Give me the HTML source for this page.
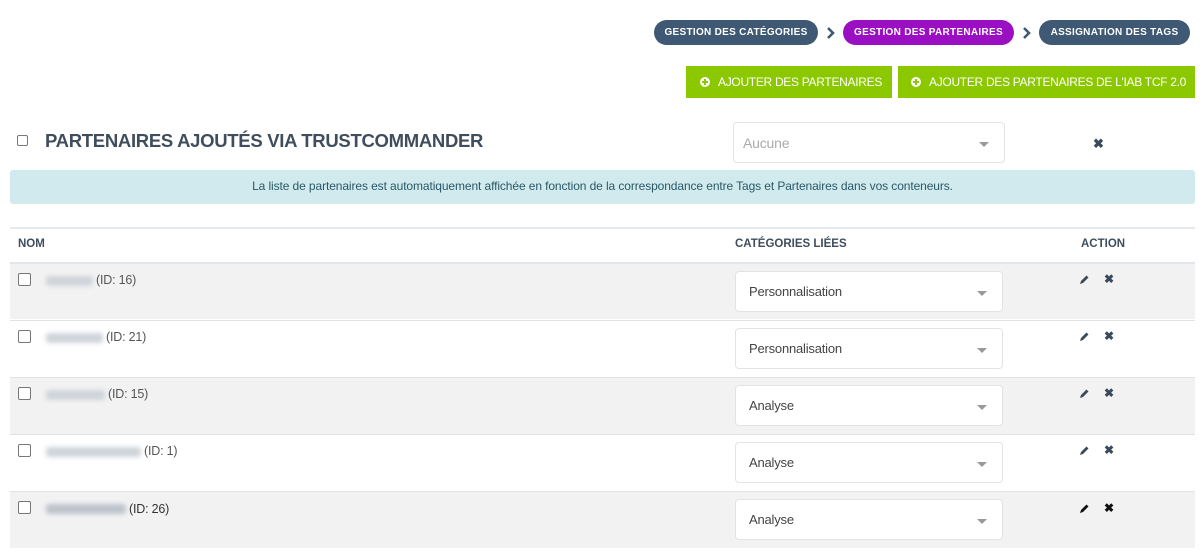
<!DOCTYPE html>
<html><head><meta charset="utf-8"><style>
*{box-sizing:border-box;margin:0;padding:0}
body{width:1200px;height:553px;background:#fff;font-family:"Liberation Sans",sans-serif;position:relative;overflow:hidden;color:#555}
.a{position:absolute}
.pill{position:absolute;top:20px;height:25px;border-radius:13px;background:#3f5873;color:#fff;font-weight:bold;font-size:10px;letter-spacing:.3px;line-height:25px;text-align:center}
.chev{position:absolute;top:27px}
.btn{position:absolute;top:66px;height:32px;background:#8cc800;color:#fff;font-size:12px;letter-spacing:-.3px;line-height:32px;padding-left:14px;white-space:nowrap}
.btn i{display:inline-block;width:10px;height:10px;border-radius:50%;background:#fff;vertical-align:-1px;margin-right:8px;position:relative}
.btn i:before{content:"";position:absolute;left:2px;top:4px;width:6px;height:2px;background:#8cc800}
.btn i:after{content:"";position:absolute;left:4px;top:2px;width:2px;height:6px;background:#8cc800}
.cb{position:absolute;width:13px;height:13px;border:1.5px solid #777;border-radius:2px;background:#fff}
.sel{position:absolute;left:735px;width:268px;height:41px;background:#fff;border:1px solid #e3e3e3;border-radius:4px;font-size:13px;color:#444;padding:12px 0 0 13px;letter-spacing:-.2px}
.sel:after{content:"";position:absolute;right:15px;top:19px;border-left:5px solid transparent;border-right:5px solid transparent;border-top:5px solid #999}
.row{position:absolute;left:10px;width:1185px;height:57px;border-top:1px solid #e2e2e2}
.g{background:#f2f2f2}
.blur{position:absolute;height:10px;background:#cfd4da;filter:blur(2.5px);border-radius:3px}
.id{position:absolute;font-size:12.5px;color:#555;letter-spacing:-.2px}
.x{position:absolute;font-weight:bold;font-size:13px;color:#3a4a5a}
.pen{position:absolute}
</style></head><body>
<div class="pill" style="left:654px;width:164px">GESTION DES CATÉGORIES</div>
<svg class="chev" style="left:826px" width="10" height="12" viewBox="0 0 10 12"><path d="M2 1 L7 6 L2 11" stroke="#3f5873" stroke-width="2.6" fill="none"/></svg>
<div class="pill" style="left:843px;width:171px;background:#9b0fc3">GESTION DES PARTENAIRES</div>
<svg class="chev" style="left:1022px" width="10" height="12" viewBox="0 0 10 12"><path d="M2 1 L7 6 L2 11" stroke="#3f5873" stroke-width="2.6" fill="none"/></svg>
<div class="pill" style="left:1039px;width:151px">ASSIGNATION DES TAGS</div>
<div class="btn" style="left:686px;width:206px"><i></i>AJOUTER DES PARTENAIRES</div>
<div class="btn" style="left:898px;width:297px;padding-left:13px"><i></i>AJOUTER DES PARTENAIRES DE L'IAB TCF 2.0</div>
<div class="cb" style="left:17px;top:135px;width:11px;height:11px"></div>
<div class="a" style="left:45px;top:130px;font-size:18.5px;font-weight:bold;color:#3f4d5c;letter-spacing:-.3px">PARTENAIRES AJOUTÉS VIA TRUSTCOMMANDER</div>
<div class="sel" style="top:122px;left:733px;width:272px;color:#aaa;font-size:14px;padding:12px 0 0 9px">Aucune</div>
<div class="x" style="left:1093px;top:136px">✖</div>
<div class="a" style="left:10px;top:170px;width:1185px;height:34px;background:#d0eaee;border-radius:3px;font-size:12px;color:#2b5866;text-align:center;line-height:32px;letter-spacing:-.1px">La liste de partenaires est automatiquement affichée en fonction de la correspondance entre Tags et Partenaires dans vos conteneurs.</div>
<div class="a" style="left:10px;top:227px;width:1185px;border-top:2px solid #e6e9ed"></div>
<div class="a" style="left:18px;top:238px;font-size:11.5px;font-weight:bold;color:#3f4d5c">NOM</div>
<div class="a" style="left:735px;top:238px;font-size:11.5px;font-weight:bold;color:#3f4d5c">CATÉGORIES LIÉES</div>
<div class="a" style="left:1081px;top:238px;font-size:11.5px;font-weight:bold;color:#3f4d5c">ACTION</div>
<div class="row g" style="top:262px;border-top:2px solid #e2e5ea"></div>
<div class="row" style="top:320px"></div>
<div class="row g" style="top:377px"></div>
<div class="row" style="top:434px"></div>
<div class="row g" style="top:491px"></div>

<div class="cb" style="left:18px;top:273px"></div><div class="blur" style="left:46px;top:276px;width:47px"></div><div class="id" style="left:96px;top:273px">(ID: 16)</div>
<div class="sel" style="top:271px">Personnalisation</div>
<div class="cb" style="left:18px;top:330px"></div><div class="blur" style="left:46px;top:333px;width:57px"></div><div class="id" style="left:106px;top:330px">(ID: 21)</div>
<div class="sel" style="top:328px">Personnalisation</div>
<div class="cb" style="left:18px;top:387px"></div><div class="blur" style="left:46px;top:390px;width:59px"></div><div class="id" style="left:108px;top:387px">(ID: 15)</div>
<div class="sel" style="top:385px">Analyse</div>
<div class="cb" style="left:18px;top:444px"></div><div class="blur" style="left:46px;top:447px;width:95px"></div><div class="id" style="left:144px;top:444px">(ID: 1)</div>
<div class="sel" style="top:442px">Analyse</div>
<div class="cb" style="left:18px;top:501px"></div><div class="blur" style="left:46px;top:504px;width:80px;background:#bcc3cb"></div><div class="id" style="left:129px;top:502px;color:#333">(ID: 26)</div>
<div class="sel" style="top:499px">Analyse</div>

<svg class="pen" style="left:1079px;top:274px" width="11" height="11" viewBox="0 0 11 11"><path d="M1 10 L2 7 L7.5 1.5 L9.5 3.5 L4 9 Z" fill="#3a4a5a"/></svg><div class="x" style="left:1104px;top:272px;font-size:12px">✖</div>
<svg class="pen" style="left:1079px;top:331px" width="11" height="11" viewBox="0 0 11 11"><path d="M1 10 L2 7 L7.5 1.5 L9.5 3.5 L4 9 Z" fill="#3a4a5a"/></svg><div class="x" style="left:1104px;top:329px;font-size:12px">✖</div>
<svg class="pen" style="left:1079px;top:388px" width="11" height="11" viewBox="0 0 11 11"><path d="M1 10 L2 7 L7.5 1.5 L9.5 3.5 L4 9 Z" fill="#3a4a5a"/></svg><div class="x" style="left:1104px;top:386px;font-size:12px">✖</div>
<svg class="pen" style="left:1079px;top:445px" width="11" height="11" viewBox="0 0 11 11"><path d="M1 10 L2 7 L7.5 1.5 L9.5 3.5 L4 9 Z" fill="#3a4a5a"/></svg><div class="x" style="left:1104px;top:443px;font-size:12px">✖</div>
<svg class="pen" style="left:1079px;top:503px" width="11" height="11" viewBox="0 0 11 11"><path d="M1 10 L2 7 L7.5 1.5 L9.5 3.5 L4 9 Z" fill="#111"/></svg><div class="x" style="left:1104px;top:501px;font-size:12px;color:#111">✖</div>
</body></html>
